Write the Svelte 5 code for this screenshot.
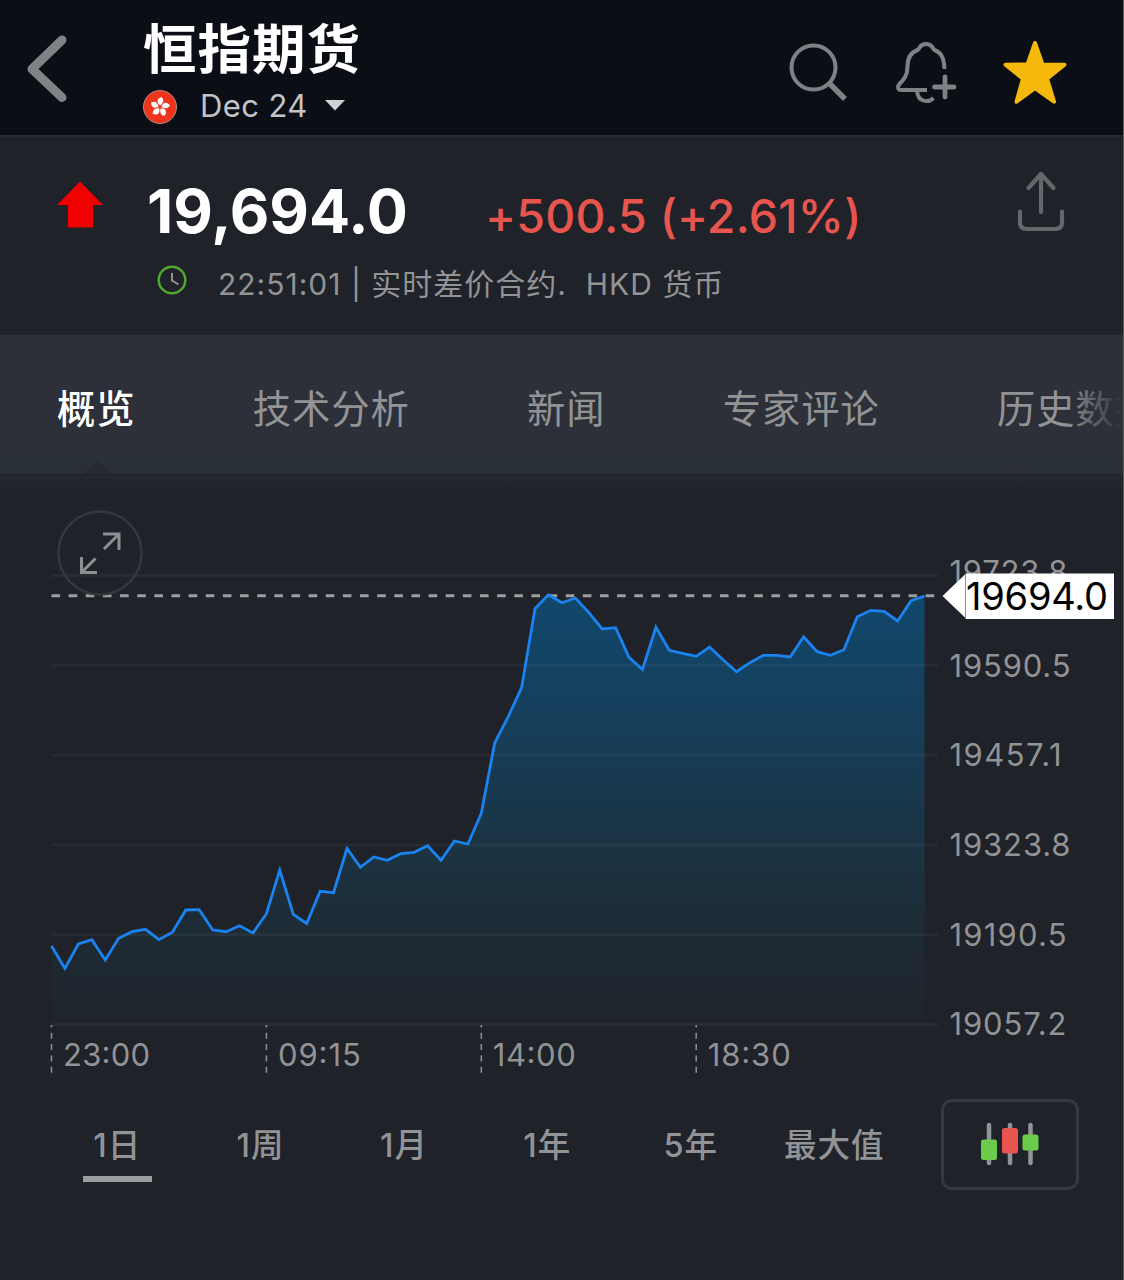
<script>
  const tabs = ["概览", "技术分析", "新闻", "专家评论", "历史数据"];
  const ranges = ["1日", "1周", "1月", "1年", "5年", "最大值"];

  let activeTab = tabs[0];
  let activeRange = ranges[0];

  const left = 51.5;
  const right = 924.5;
  const bottom = 1024.5;

  const yAxis = [
    { label: "19723.8", y: 575.5, labelY: 583, width: 116 },
    { label: "19590.5", y: 665.3, labelY: 677, width: 119 },
    { label: "19457.1", y: 755.1, labelY: 766, width: 110 },
    { label: "19323.8", y: 844.9, labelY: 856, width: 119 },
    { label: "19190.5", y: 934.7, labelY: 945.5, width: 115 },
    { label: "19057.2", y: 1024.5, labelY: 1035, width: 115 },
  ];

  const xAxis = [
    { label: "23:00", x: 51.5, width: 87 },
    { label: "09:15", x: 266.4, width: 83 },
    { label: "14:00", x: 481.3, width: 83 },
    { label: "18:30", x: 696.2, width: 83 },
  ];

  const series = [
    946, 968.5, 944, 939.7, 960, 938.3, 931.7, 929.3, 939.7, 932.3, 910, 909.7,
    930, 931.7, 925.7, 933, 913.7, 870, 914.3, 923.5, 891.3, 892.7, 848.5, 867.3,
    857, 860.3, 853.7, 852.3, 845.7, 860.3, 841, 844, 813.3, 743, 717, 687.7,
    608.7, 594.7, 602.7, 598, 612.3, 629, 627.7, 657.3, 669.5, 627.3, 650.3,
    653.3, 656.3, 647, 659.7, 671.7, 662.7, 655.3, 655.3, 657, 636.7, 651.7,
    655.3, 649.7, 616.7, 610.3, 611.3, 621, 600.7, 596,
  ];

  const step = (right - left) / (series.length - 1);

  $: line = series.map((y, i) => `${(left + i * step).toFixed(1)},${y}`).join(" ");
  $: area = `${left},${bottom} ${line} ${right},${bottom}`;
</script>

<style>
  :global(body) {
    background: #1f2229;
  }

  .app {
    width: 1124px;
    height: 1280px;
    box-sizing: border-box;
    border-right: 1px solid #5b5d61;
    overflow: hidden;
    background: #1f2229;
    color: #929395;
    font-family: Inter, "Noto Sans CJK SC", sans-serif;
  }

  button {
    margin: 0;
    padding: 0;
    border: 0;
    background: none;
    color: inherit;
    font: inherit;
  }

  svg {
    display: block;
  }

  header {
    display: flex;
    height: 137px;
    box-sizing: border-box;
    padding-left: 24px;
    background: #0b0e15;
    border-bottom: 2px solid #282b31;
  }

  .back {
    align-self: flex-start;
    margin-top: 32px;
  }

  .title {
    flex: 1;
    padding: 20px 0 0 71px;
  }

  h1 {
    margin: 0;
    height: 60px;
    line-height: 60px;
    font-size: 53.5px;
    font-weight: 700;
    letter-spacing: 1px;
    color: #fff;
    white-space: nowrap;
  }

  .contract {
    display: flex;
    align-items: center;
    height: 34px;
    margin-top: 10px;
    color: #c3c4c7;
    font-size: 31px;
    line-height: 34px;
    letter-spacing: 0.4px;
  }

  .contract span {
    margin: -2px 17px 0 23px;
  }

  .contract .caret {
    margin-top: -3px;
  }

  .actions {
    display: flex;
    padding: 36px 51px 0 0;
    gap: 40px;
  }

  .quote {
    height: 198px;
    box-sizing: border-box;
    padding: 0 57px 0 57px;
    display: flex;
  }

  .arrow {
    margin: 44px 44px 0 0;
  }

  .numbers {
    flex: 1;
    padding-top: 36px;
  }

  .price-row {
    display: flex;
    align-items: baseline;
    height: 76px;
    line-height: 76px;
    white-space: nowrap;
  }

  .price {
    width: 338px;
    color: #fff;
    font-size: 61px;
    font-weight: 700;
    letter-spacing: 0;
  }

  .change {
    color: #e8554f;
    font-size: 46.5px;
    font-weight: 500;
    letter-spacing: 0.2px;
  }

  .info {
    display: flex;
    align-items: center;
    height: 40px;
    margin-top: 13px;
    padding-left: 10px;
    font-size: 30px;
    letter-spacing: 1px;
    white-space: pre;
  }

  .info svg {
    margin: -4px 31px 0 0;
  }

  .share {
    align-self: flex-start;
    margin-top: 31px;
  }

  nav {
    position: relative;
    display: flex;
    gap: 117.4px;
    height: 139px;
    padding-left: 57px;
    overflow: hidden;
    background: linear-gradient(#2d3039 0, #2d3039 80%, #2a3038 92%, #2a2f37);
  }

  nav button {
    flex: none;
    padding-top: 3px;
    font-size: 38.3px;
    letter-spacing: 0.9px;
    white-space: nowrap;
  }

  nav button.active {
    color: #fff;
    font-weight: 500;
  }

  .fade {
    position: absolute;
    top: 0;
    right: 0;
    width: 58px;
    height: 110px;
    background: linear-gradient(to right, #2d303900, #2d3039e0 88%, #2d3039);
  }

  .pointer {
    position: absolute;
    left: 84px;
    bottom: 0;
  }

  .chart {
    position: relative;
    background: linear-gradient(#242830, #1f2229 16px);
  }

  .expand {
    position: absolute;
    left: 57px;
    top: 36px;
  }

  .axis {
    fill: #929395;
    font-size: 31px;
  }

  .flag-text {
    fill: #000;
    font-size: 38px;
  }

  .ranges {
    display: flex;
    align-items: center;
    padding-left: 45.5px;
    margin-top: 13px;
  }

  .ranges .cell {
    width: 143.4px;
    flex: none;
    display: flex;
    justify-content: center;
  }

  .ranges .cell button {
    width: 69px;
    height: 72px;
    margin-top: 2px;
    border-bottom: 6px solid transparent;
    display: flex;
    align-items: center;
    justify-content: center;
    font-size: 32.5px;
    font-weight: 500;
    letter-spacing: 1px;
    white-space: nowrap;
  }

  .ranges .cell button.active {
    border-color: #9b9c9e;
  }

  .ranges .cell button::first-letter {
    letter-spacing: 3px;
  }

  .ranges .cell:last-of-type button::first-letter {
    letter-spacing: 1px;
  }

  .candles {
    display: flex;
    align-items: center;
    justify-content: center;
    width: 138px;
    height: 91px;
    margin-left: 35px;
    box-sizing: border-box;
    border: 3px solid #35383d;
    border-radius: 11px;
  }

  .candles svg {
    margin-top: -2px;
  }
</style>

<div class="app">
  <header>
    <button class="back" aria-label="Back">
      <svg width="48" height="74" viewBox="24 32 48 74">
        <path d="M62 40 32 69l30 28.500" fill="none" stroke="#808286" stroke-width="9" stroke-linecap="round" stroke-linejoin="round" />
      </svg>
    </button>
    <div class="title">
      <h1>恒指期货</h1>
      <div class="contract">
        <svg width="34" height="34" viewBox="-17 -17 34 34">
          <circle r="16.500" fill="#f0341c" stroke="#a98f86" stroke-width="1" />
          {#each [0, 72, 144, 216, 288] as angle}
            <path d="M0-1.500C-4-4-4-8 1-10 4-7 3-4 0-1.500Z" fill="#fff" transform="rotate({angle + 4})" />
          {/each}
        </svg>
        <span>Dec 24</span>
        <svg class="caret" width="20" height="11"><path d="M0 0h20L10 10.500Z" fill="#d0d1d3" /></svg>
      </div>
    </div>
    <div class="actions">
      <svg width="66" height="74" viewBox="785 36 66 74" fill="none" stroke="#7f8185">
        <circle cx="812.500" cy="67.500" r="22" stroke-width="4" />
        <path d="M828 83l16 16" stroke-width="5.500" />
      </svg>
      <svg width="66" height="74" viewBox="892 36 66 74" fill="none" stroke="#7f8185" stroke-width="4">
        <path d="M927 90h-26c-3 0-4-3-2-5.500 5-5 8.500-9 8.500-18 0-9 3-14 10-16.500 3-1.500 1.500-6 8.500-6s6 4.500 8.500 6c7 2.500 9.500 8 10 19" />
        <path d="M917 91c1 11.500 11.500 12 16.500 7" />
        <path d="M945 77v20M934.500 87h19.500" stroke-width="4.800" stroke-linecap="round" />
      </svg>
      <svg width="74" height="74" viewBox="998 36 74 74">
        <path d="M1035 43l7.500 21.500 22 .2-17.500 14 7 23-19-13.500-18.500 13.500 6.500-23-17.500-14 22-.2Z" fill="#f4b90b" stroke="#f4b90b" stroke-width="4" stroke-linejoin="round" />
      </svg>
    </div>
  </header>

  <section class="quote">
    <svg class="arrow" width="46" height="48"><path d="M23 .5 46 24H36v22.500H11V24H0Z" fill="#f00000" /></svg>
    <div class="numbers">
      <div class="price-row">
        <span class="price">19,694.0</span>
        <span class="change">+500.5 (+2.61%)</span>
      </div>
      <div class="info">
        <svg width="30" height="30" fill="none">
          <circle cx="15" cy="15" r="13.300" stroke="#4fa733" stroke-width="2.500" />
          <path d="M15 8v7.500l6.500 4" stroke="#929395" stroke-width="2" />
        </svg>
        <span>22:51:01 | 实时差价合约.  HKD 货币</span>
      </div>
    </div>
    <svg class="share" width="52" height="66" viewBox="1014 168 52 66" fill="none" stroke="#65676b" stroke-width="4.200" stroke-linecap="round">
      <path d="M1020 211.500v11q0 6.500 6.500 6.500h29q6.500 0 6.500-6.500v-11" />
      <path d="M1041 212v-37M1028.500 188l12.500-14 12.500 14" stroke-linejoin="round" />
    </svg>
  </section>

  <nav>
    {#each tabs as tab}
      <button class:active={tab === activeTab} on:click={() => (activeTab = tab)}>{tab}</button>
    {/each}
    <div class="fade"></div>
    <svg class="pointer" width="28" height="13"><path d="M0 13 13.500 1 27 13" fill="#262b33" stroke="#20242b" /></svg>
  </nav>

  <div class="chart">
    <svg width="1123" height="612" viewBox="0 474 1123 612">
      <defs>
        <linearGradient id="fill" x1="0" y1="595" x2="0" y2="1024" gradientUnits="userSpaceOnUse">
          <stop offset="0" stop-color="#11476c" />
          <stop offset="0.3" stop-color="#163e5a" />
          <stop offset="0.6" stop-color="#1b3342" />
          <stop offset="0.82" stop-color="#1e2a33" />
          <stop offset="1" stop-color="#1f242c" />
        </linearGradient>
      </defs>
      <path d="M0 474.500h1123" stroke="#1f242b" />
      <polygon points={area} fill="url(#fill)" />
      {#each yAxis as tick}
        <path d="M{left} {tick.y}H938" stroke="#fff" stroke-opacity="0.045" stroke-width="2.800" />
        <text class="axis" x="949.500" y={tick.labelY} textLength={tick.width + 2}>{tick.label}</text>
      {/each}
      {#each xAxis as tick}
        <path d="M{tick.x} 1025v49" stroke="#8b8c8f" stroke-width="1.600" stroke-dasharray="6 5.300" stroke-dashoffset="3.500" />
        <text class="axis" x={tick.x + 11.5} y="1066" textLength={tick.width}>{tick.label}</text>
      {/each}
      <path d="M{left} 595.800H936" stroke="#9d9ea0" stroke-width="3" stroke-dasharray="8.600 8.540" />
      <polyline points={line} fill="none" stroke="#1a83f0" stroke-width="2.800" />
      <path d="M942.500 596 966 573.500v45Z" fill="#fff" />
      <rect x="965.500" y="573.500" width="148.500" height="45.500" fill="#fff" />
      <path d="M965.500 574v44.500" stroke="#777" stroke-width="0.800" />
      <text class="flag-text" x="966" y="609.500" textLength="142">19694.0</text>
    </svg>
    <button class="expand" aria-label="Expand">
      <svg width="86" height="86" fill="none">
        <circle cx="43" cy="43" r="41.500" stroke="#34373b" stroke-width="2.500" />
        <path d="M46 24h16v16M62 24 47 39M24.500 47v15.500H40M24.500 62.500l14-14" stroke="#8e8f91" stroke-width="3" />
      </svg>
    </button>
  </div>

  <div class="ranges">
    {#each ranges as range}
      <div class="cell">
        <button class:active={range === activeRange} on:click={() => (activeRange = range)}>{range}</button>
      </div>
    {/each}
    <button class="candles" aria-label="Candles">
      <svg width="58" height="44">
        <g stroke="#929395" stroke-width="4.500" stroke-linecap="round">
          <path d="M8 3v38M29 3v38M49.500 3v38" />
        </g>
        <rect x="0" y="17.500" width="16" height="20.500" rx="2.500" fill="#6bcb4b" />
        <rect x="21" y="6" width="16" height="25.500" rx="2.500" fill="#e8554f" />
        <rect x="41.500" y="12.500" width="16" height="16" rx="2.500" fill="#6bcb4b" />
      </svg>
    </button>
  </div>
</div>
